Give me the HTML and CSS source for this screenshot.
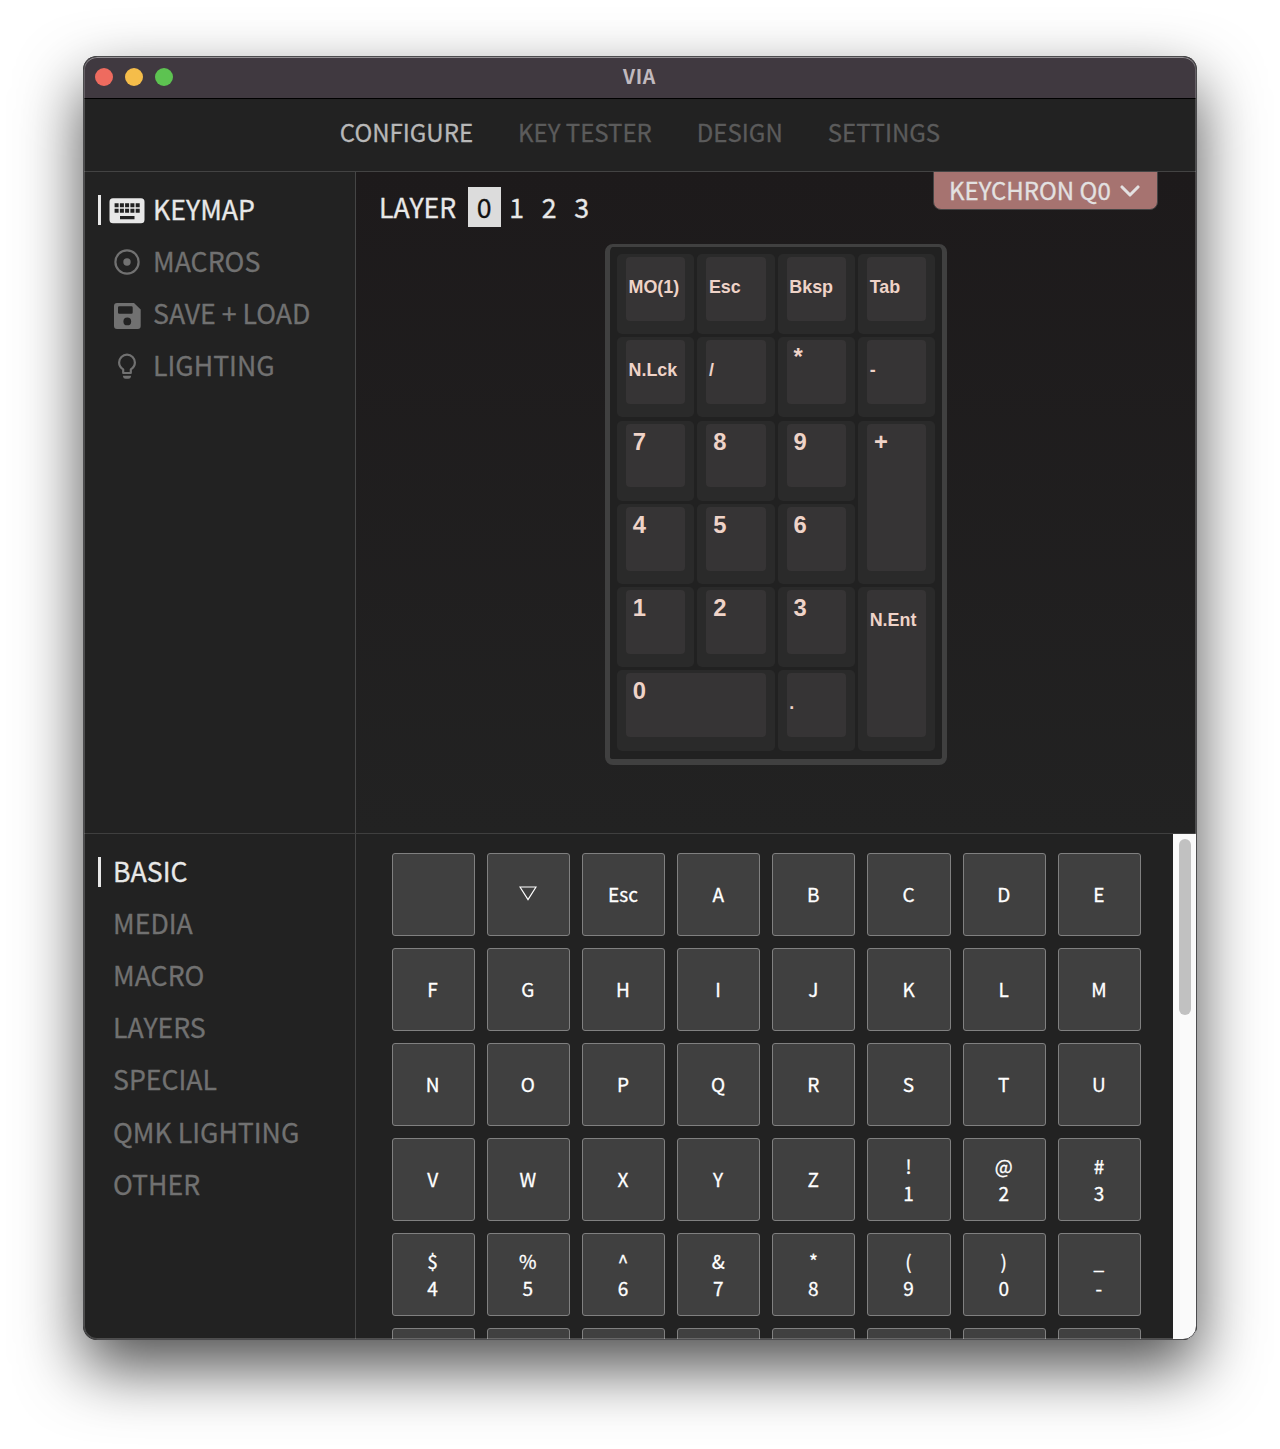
FILE: index.html
```html
<!DOCTYPE html>
<html lang="en">
<head>
<meta charset="utf-8">
<title>VIA</title>
<link rel="stylesheet" href="styles.css">
</head>
<body>
<div class="window">
  <header class="titlebar">
    <div class="lights"><span class="light red"></span><span class="light yellow"></span><span class="light green"></span></div>
    <h1 class="title">VIA</h1>
  </header>
  <nav class="tabs"><a class="tab active">CONFIGURE</a><a class="tab">KEY TESTER</a><a class="tab">DESIGN</a><a class="tab">SETTINGS</a></nav>
  <div class="row upper">
    <aside class="side">
      <div class="item active"><span class="icon keyboard"><svg width="36" height="26" viewBox="0 0 36 26"><path fill="currentColor" fill-rule="evenodd" d="M4 .3h28a3.500 3.500 0 0 1 3.500 3.500v18a3.500 3.500 0 0 1-3.500 3.500H4A3.500 3.500 0 0 1 .5 21.800v-18A3.500 3.500 0 0 1 4 .3zM5.600 5.300v4h4v-4zm5.300 0v4h4v-4zm5.200 0v4h4v-4zm5.300 0v4h4v-4zm5.300 0v4h4v-4zM5.600 10.800v4h4v-4zm5.300 0v4h4v-4zm5.200 0v4h4v-4zm5.300 0v4h4v-4zm5.300 0v4h4v-4zM11 18v3.300h14.500V18z"/></svg></span><span>KEYMAP</span></div>
      <div class="item"><span class="icon"><svg width="26" height="26" viewBox="0 0 26 26"><circle cx="13" cy="13" r="11.600" fill="none" stroke="currentColor" stroke-width="2.200"/><circle cx="13" cy="13" r="3.700" fill="currentColor"/></svg></span><span>MACROS</span></div>
      <div class="item"><span class="icon save"><svg width="27" height="26" viewBox="0 0 27 26"><path fill="currentColor" fill-rule="evenodd" d="M3 0h17l6.700 6.500V23a3 3 0 0 1-3 3H3a3 3 0 0 1-3-3V3a3 3 0 0 1 3-3zm2.200 3.300a1.200 1.200 0 0 0-1.200 1.200v5a1.200 1.200 0 0 0 1.200 1.200h12.300a1.200 1.200 0 0 0 1.200-1.200v-5a1.200 1.200 0 0 0-1.200-1.200zM13.300 14.500a3.900 3.900 0 1 0 0 7.800 3.900 3.900 0 0 0 0-7.800z"/></svg></span><span>SAVE + LOAD</span></div>
      <div class="item"><span class="icon bulb"><svg width="20" height="27" viewBox="0 0 20 27"><path fill="none" stroke="currentColor" stroke-width="2.200" stroke-linejoin="round" d="M6.200 20h7.600v-3.600c2.600-1.600 4.100-4 4.100-6.800a7.900 7.900 0 0 0-15.800 0c0 2.800 1.500 5.200 4.100 6.800z"/><path fill="currentColor" d="M6 22.800h8v.6a2.600 2.600 0 0 1-2.600 2.300H8.600A2.600 2.600 0 0 1 6 23.400z"/></svg></span><span>LIGHTING</span></div>
    </aside>
    <main class="stage">
      <div class="layers"><span class="layers-label">LAYER</span><span class="layer on">0</span><span class="layer">1</span><span class="layer">2</span><span class="layer">3</span></div>
      <div class="device"><span>KEYCHRON Q0</span><svg width="20" height="12" viewBox="0 0 20 12"><path d="M2 2l8 8 8-8" fill="none" stroke="currentColor" stroke-width="3.100" stroke-linecap="round" stroke-linejoin="round"/></svg></div>
      <div class="case">
        <div class="cap"><b>MO(1)</b></div><div class="cap"><b>Esc</b></div><div class="cap"><b>Bksp</b></div><div class="cap"><b>Tab</b></div>
        <div class="cap"><b>N.Lck</b></div><div class="cap"><b>/</b></div><div class="cap big star"><b>*</b></div><div class="cap"><b>-</b></div>
        <div class="cap big"><b>7</b></div><div class="cap big"><b>8</b></div><div class="cap big"><b>9</b></div><div class="cap big tall"><b>+</b></div>
        <div class="cap big"><b>4</b></div><div class="cap big"><b>5</b></div><div class="cap big"><b>6</b></div>
        <div class="cap big"><b>1</b></div><div class="cap big"><b>2</b></div><div class="cap big"><b>3</b></div><div class="cap tall"><b>N.Ent</b></div>
        <div class="cap big wide"><b>0</b></div><div class="cap"><b>.</b></div>
      </div>
    </main>
  </div>
  <div class="row lower">
    <aside class="side">
      <div class="item active">BASIC</div><div class="item">MEDIA</div><div class="item">MACRO</div><div class="item">LAYERS</div><div class="item">SPECIAL</div><div class="item">QMK LIGHTING</div><div class="item">OTHER</div>
    </aside>
    <section class="keys">
      <div class="key"></div><div class="key"><svg width="18" height="15" viewBox="0 0 18 15"><path d="M1 1h16L9 13.600z" fill="none" stroke="currentColor" stroke-width="1.200"/></svg></div><div class="key">Esc</div><div class="key">A</div><div class="key">B</div><div class="key">C</div><div class="key">D</div><div class="key">E</div>
      <div class="key">F</div><div class="key">G</div><div class="key">H</div><div class="key">I</div><div class="key">J</div><div class="key">K</div><div class="key">L</div><div class="key">M</div>
      <div class="key">N</div><div class="key">O</div><div class="key">P</div><div class="key">Q</div><div class="key">R</div><div class="key">S</div><div class="key">T</div><div class="key">U</div>
      <div class="key">V</div><div class="key">W</div><div class="key">X</div><div class="key">Y</div><div class="key">Z</div><div class="key">!<br>1</div><div class="key">@<br>2</div><div class="key">#<br>3</div>
      <div class="key">$<br>4</div><div class="key">%<br>5</div><div class="key">^<br>6</div><div class="key">&amp;<br>7</div><div class="key">*<br>8</div><div class="key">(<br>9</div><div class="key">)<br>0</div><div class="key">_<br>-</div>
      <div class="key"></div><div class="key"></div><div class="key"></div><div class="key"></div><div class="key"></div><div class="key"></div><div class="key"></div><div class="key"></div>
    </section>
    <div class="scrollbar"><div class="thumb"></div></div>
  </div>
</div>
</body>
</html>
```
FILE: styles.css
```css
* { box-sizing: border-box; }
body {
  margin: 0;
  height: 1449px;
  padding: 56px 83px 0;
  overflow: hidden;
  background: #fff;
  font-family: "Noto Sans CJK JP", "Noto Sans", sans-serif;
}
svg { display: block; }
.window {
  position: relative;
  display: flex;
  flex-direction: column;
  width: 1114px;
  height: 1284px;
  padding: 1px;
  border-radius: 14px;
  overflow: hidden;
  background: #222;
  box-shadow: 0 28px 64px rgba(0, 0, 0, .69);
}
/* hairline rim over the window content */
.window::after {
  content: "";
  position: absolute;
  inset: 0;
  border-radius: 14px;
  border: 1px solid #4c4c4e;
  box-shadow: inset 0 1px 0 rgba(255, 255, 255, .3), inset 0 0 0 1px rgba(255, 255, 255, .2);
  pointer-events: none;
}
.titlebar {
  display: grid;
  grid-template-columns: 1fr auto 1fr;
  align-items: start;
  height: 42px;
  padding: 0 12px 0 11px;
  background: #403940;
  border-bottom: 1px solid #000;
}
.lights { display: flex; gap: 12px; padding-top: 11px; }
.light { width: 18px; height: 18px; border-radius: 50%; }
.red { background: #ee6b5f; }
.yellow { background: #f5bd4a; }
.green { background: #5dc351; }
.title { margin: 0; font-size: 19.500px; line-height: 37px; font-weight: 700; letter-spacing: .6px; color: #c0babf; }
.tabs {
  display: flex;
  justify-content: center;
  gap: 45px;
  height: 73px;
  border-bottom: 1px solid #434343;
  font-size: 24px;
  line-height: 65px;
  color: #5b5b5b;
  -webkit-text-stroke: .3px;
}
.tab.active { color: #b8b8b8; }
.row { display: flex; }
.upper { height: 662px; border-bottom: 1px solid #3f3f3f; }
.lower { height: 505px; overflow: hidden; }
.side {
  width: 272px;
  flex: none;
  border-right: 1px solid #454545;
  padding: 12px 0 0 14px;
  font-size: 26.700px;
  color: #717171;
  -webkit-text-stroke: .3px;
}
.item { display: flex; align-items: center; height: 52.100px; padding: 0 0 2px 15px; line-height: 50px; white-space: nowrap; }
.item.active { color: #e8e8e8; }
.item.active::before { content: ""; width: 3px; height: 30px; margin: 1px 12px 0 -15px; background: currentColor; }
.icon { display: flex; justify-content: center; width: 36px; margin: 2px 8px 0 -4px; }
.icon.keyboard { padding-top: 1px; }
.icon.save { padding-top: 3px; }
.icon.bulb { padding-top: 1px; }
.stage { position: relative; flex: 1; background: linear-gradient(#1d1a1b, #222); }
.layers { display: flex; padding: 15px 0 0 23px; height: 72px; font-size: 26.700px; line-height: 39px; color: #e8e8e8; -webkit-text-stroke: .3px; }
.layers-label { width: 89px; }
.layer { width: 32.500px; height: 40px; text-align: center; }
.layer.on { background: #dcdcdc; color: #111; }
.device {
  position: absolute;
  top: -1px;
  right: 38px;
  display: flex;
  align-items: center;
  gap: 9px;
  width: 225px;
  height: 39px;
  padding-left: 15px;
  border: 1px solid #454545;
  border-radius: 0 0 8px 8px;
  background: #a67370;
  color: #e3e1e1;
  font-size: 24px;
  -webkit-text-stroke: .3px;
}
.device span { height: 37px; line-height: 35px; }
.case {
  display: grid;
  grid-template-columns: repeat(4, 77.300px);
  grid-auto-rows: 80.200px;
  gap: 3.100px;
  width: 342px;
  height: 521px;
  margin-left: 249px;
  padding: 7px;
  border: 5px solid #404040;
  border-top-width: 3px;
  border-bottom-width: 6px;
  border-radius: 8px;
  background: #212121;
}
.cap { padding: 3px 9px 13.300px; border-radius: 5px; background: #2a2a2a; }
.cap b {
  display: block;
  height: 100%;
  padding: 19px 0 0 2.500px;
  border-radius: 4px;
  background: #363435;
  font: bold 17.900px/22px "Liberation Sans", Arial, sans-serif;
  color: #efd3c8;
}
.cap.big b { padding: 5px 0 0 6.800px; font-size: 23.800px; line-height: 26px; }
.cap.star b { padding-top: 4px; }
.tall { grid-row: span 2; }
.wide { grid-column: span 2; }
.keys {
  flex: 1;
  display: grid;
  grid-template-columns: repeat(8, 83.200px);
  grid-auto-rows: 83.200px;
  gap: 12px;
  padding: 18.500px 0 0 35.500px;
}
.key {
  display: flex;
  align-items: center;
  justify-content: center;
  padding: 0 1px 2px 0;
  border: 1px solid #808080;
  border-radius: 3px;
  background: #404040;
  color: #fff;
  font-size: 19px;
  line-height: 27px;
  text-align: center;
  -webkit-text-stroke: .3px;
}
.scrollbar { width: 23px; flex: none; padding: 5px 5px 0 6px; background: #fafafa; }
.thumb { width: 12px; height: 176px; border-radius: 6px; background: #c1c1c1; }
```
